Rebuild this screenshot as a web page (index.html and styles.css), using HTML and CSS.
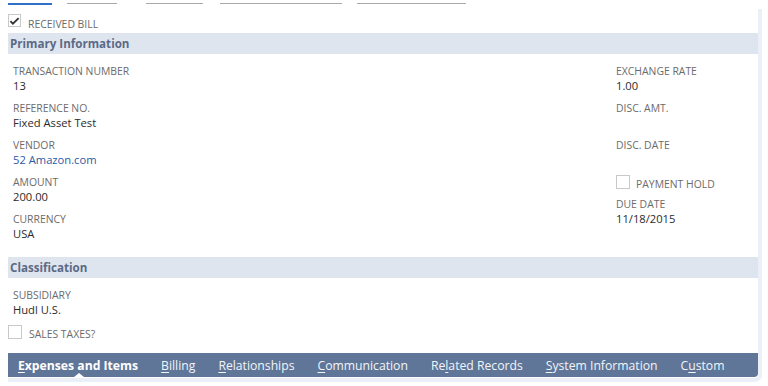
FILE: index.html
```html
<!DOCTYPE html>
<html>
<head>
<meta charset="utf-8">
<link rel="stylesheet" href="styles.css">
</head>
<body>
<div class="topline">
  <span class="seg seg-active s1"></span>
  <span class="seg s2"></span>
  <span class="seg s3"></span>
  <span class="seg s4"></span>
  <span class="seg s5"></span>
</div>
<div class="panel">
  <div class="check-row top-check">
    <span class="box checked"><svg width="12" height="10" viewBox="0 0 12 10"><path d="M1.5 5.2 L4.3 8 L10.5 1.8" fill="none" stroke="#333" stroke-width="2"/></svg></span>
    <span class="check-label">RECEIVED BILL</span>
  </div>
  <div class="section-head">Primary Information</div>
  <div class="fields">
    <div class="col">
      <div class="field"><div class="label">TRANSACTION NUMBER</div><div class="value">13</div></div>
      <div class="field"><div class="label">REFERENCE NO.</div><div class="value">Fixed Asset Test</div></div>
      <div class="field"><div class="label">VENDOR</div><div class="value link">52 Amazon.com</div></div>
      <div class="field"><div class="label">AMOUNT</div><div class="value">200.00</div></div>
      <div class="field"><div class="label">CURRENCY</div><div class="value">USA</div></div>
    </div>
    <div class="col col-right">
      <div class="field"><div class="label">EXCHANGE RATE</div><div class="value">1.00</div></div>
      <div class="field"><div class="label">DISC. AMT.</div><div class="value"></div></div>
      <div class="field"><div class="label">DISC. DATE</div><div class="value"></div></div>
      <div class="check-row field-check">
        <span class="box"></span>
        <span class="check-label">PAYMENT HOLD</span>
      </div>
      <div class="field"><div class="label">DUE DATE</div><div class="value">11/18/2015</div></div>
    </div>
  </div>
  <div class="section-head">Classification</div>
  <div class="fields fields-class">
    <div class="col">
      <div class="field"><div class="label">SUBSIDIARY</div><div class="value">Hudl U.S.</div></div>
      <div class="check-row field-check sales">
        <span class="box"></span>
        <span class="check-label">SALES TAXES?</span>
      </div>
    </div>
  </div>
  <div class="tabbar">
    <span class="tab active"><u>E</u>xpenses and Items</span>
    <span class="tab"><u>B</u>illing</span>
    <span class="tab"><u>R</u>elationships</span>
    <span class="tab"><u>C</u>ommunication</span>
    <span class="tab">Re<u>l</u>ated Records</span>
    <span class="tab"><u>S</u>ystem Information</span>
    <span class="tab">C<u>u</u>stom</span>
  </div>
</div>
</body>
</html>
```

FILE: styles.css
```css
html, body {
  margin: 0;
  padding: 0;
  background: #ffffff;
  font-family: "Open Sans", "Liberation Sans", sans-serif;
}

.topline {
  display: flex;
  height: 6px;
  padding-top: 3px;
}
.seg {
  display: block;
  height: 1px;
  border-top: 1px solid #a9a9a9;
}
.seg-active { border-top: 2px solid #2f6fc6; height: 0; }
.s1 { margin-left: 8px; width: 44px; }
.s2 { margin-left: 15px; width: 50px; }
.s3 { margin-left: 29px; width: 57px; }
.s4 { margin-left: 17px; width: 122px; }
.s5 { margin-left: 15px; width: 109px; }

.panel {
  margin-left: 8px;
  width: 750px;
  border-right: 4px solid #ebf0f8;
  border-bottom: 4px solid #ebf0f8;
  border-bottom-right-radius: 7px;
  padding-bottom: 1px;
}

.check-row {
  display: flex;
  align-items: center;
}
.top-check {
  height: 17px;
  padding-top: 3px;
  margin-bottom: 4px;
}
.box {
  box-sizing: border-box;
  width: 13px;
  height: 13px;
  border: 1px solid #c9c9c9;
  background: #fff;
  display: flex;
  align-items: center;
  justify-content: center;
  flex: none;
}
.check-label {
  margin-left: 7px;
  font-size: 10.4px;
  color: #6b6b6b;
  position: relative;
  top: 2px;
}
.top-check .check-label { top: 3px; }

.section-head {
  background: #dfe5ef;
  height: 21px;
  line-height: 21px;
  padding-left: 2px;
  font-size: 11.6px;
  font-weight: 700;
  color: #5b6a86;
}

.fields {
  display: flex;
  padding: 10px 0 16px 5px;
}
.col { display: flex; flex-direction: column; gap: 8px; }
.col-right { margin-left: auto; width: 142px; }
.field { display: flex; flex-direction: column; }
.label {
  font-size: 10.4px;
  line-height: 15px;
  color: #6b6b6b;
}
.value {
  font-size: 11.2px;
  line-height: 15px;
  height: 15px;
  margin-top: -1px;
  color: #2b2b2b;
}
.value.link { color: #2a5ba6; }

.field-check {
  height: 16px;
  margin-top: -1px;
  margin-bottom: -1px;
}
.field-check .box { width: 14px; height: 14px; }
.field-check .check-label { margin-left: 6px; }

.fields-class { padding-bottom: 14px; }
.sales { margin-top: -1px; margin-left: -5px; }
.sales .check-label { margin-left: 7px; }

.tabbar {
  position: relative;
  display: flex;
  align-items: center;
  height: 24px;
  background: #5f7698;
  border-bottom-right-radius: 4px;
  padding-left: 10px;
}
.tab {
  font-size: 12.2px;
  color: #f2f5fa;
  margin-right: 23px;
  white-space: nowrap;
}
.tab u { text-decoration: underline; text-underline-offset: 2px; }
.tab.active { font-weight: 700; color: #ffffff; }
.tab.active::after {
  content: "";
  position: absolute;
  left: 66px;
  bottom: 0;
  border-left: 5px solid transparent;
  border-right: 5px solid transparent;
  border-bottom: 4px solid #ffffff;
}
```
